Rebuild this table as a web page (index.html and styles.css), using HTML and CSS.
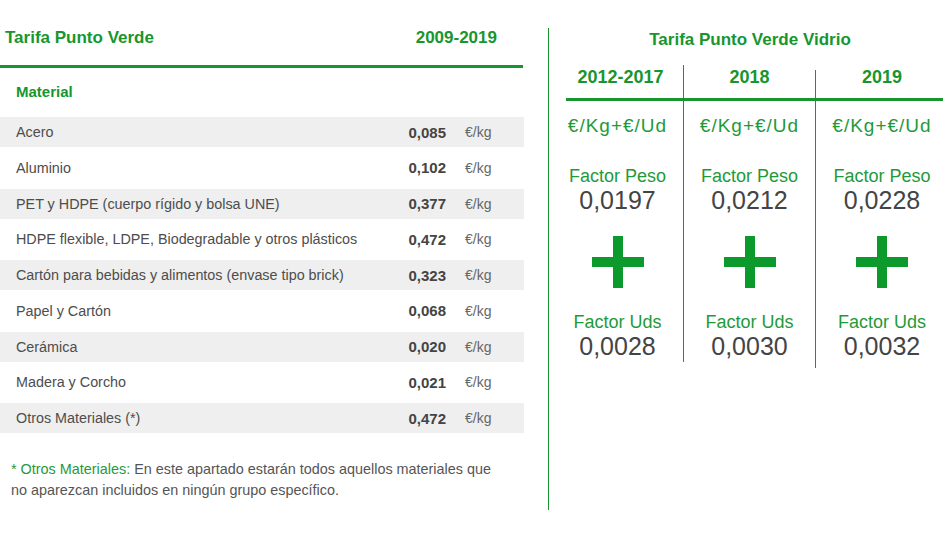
FILE: index.html
```html
<!DOCTYPE html>
<html lang="es">
<head>
<meta charset="utf-8">
<title>Tarifa Punto Verde</title>
<link rel="stylesheet" href="styles.css">
</head>
<body>
<div class="page">
  <section class="left">
    <div class="head">
      <span class="title">Tarifa Punto Verde</span>
      <span class="title">2009-2019</span>
    </div>
    <div class="material">Material</div>
    <div class="rows">
      <div class="row alt"><span class="name">Acero</span><span class="val">0,085</span><span class="unit">€/kg</span></div>
      <div class="row"><span class="name">Aluminio</span><span class="val">0,102</span><span class="unit">€/kg</span></div>
      <div class="row alt"><span class="name">PET y HDPE (cuerpo rígido y bolsa UNE)</span><span class="val">0,377</span><span class="unit">€/kg</span></div>
      <div class="row"><span class="name">HDPE flexible, LDPE, Biodegradable y otros plásticos</span><span class="val">0,472</span><span class="unit">€/kg</span></div>
      <div class="row alt"><span class="name">Cartón para bebidas y alimentos (envase tipo brick)</span><span class="val">0,323</span><span class="unit">€/kg</span></div>
      <div class="row"><span class="name">Papel y Cartón</span><span class="val">0,068</span><span class="unit">€/kg</span></div>
      <div class="row alt"><span class="name">Cerámica</span><span class="val">0,020</span><span class="unit">€/kg</span></div>
      <div class="row"><span class="name">Madera y Corcho</span><span class="val">0,021</span><span class="unit">€/kg</span></div>
      <div class="row alt"><span class="name">Otros Materiales (*)</span><span class="val">0,472</span><span class="unit">€/kg</span></div>
    </div>
    <p class="note"><span class="green">* Otros Materiales:</span> En este apartado estarán todos aquellos materiales que no aparezcan incluidos en ningún grupo específico.</p>
  </section>
  <section class="right">
    <div class="rtitle">Tarifa Punto Verde Vidrio</div>
    <div class="cols">
      <div class="col c1">
        <div class="chead">2012-2017</div>
        <div class="formula">€/Kg+€/Ud</div>
        <div class="label">Factor Peso</div>
        <div class="num">0,0197</div>
        <div class="plus"></div>
        <div class="label">Factor Uds</div>
        <div class="num">0,0028</div>
      </div>
      <div class="col c2">
        <div class="chead">2018</div>
        <div class="formula">€/Kg+€/Ud</div>
        <div class="label">Factor Peso</div>
        <div class="num">0,0212</div>
        <div class="plus"></div>
        <div class="label">Factor Uds</div>
        <div class="num">0,0030</div>
      </div>
      <div class="col c3">
        <div class="chead">2019</div>
        <div class="formula">€/Kg+€/Ud</div>
        <div class="label">Factor Peso</div>
        <div class="num">0,0228</div>
        <div class="plus"></div>
        <div class="label">Factor Uds</div>
        <div class="num">0,0032</div>
      </div>
    </div>
  </section>
</div>
</body>
</html>
```

FILE: styles.css
```css
html, body {
  margin: 0;
  padding: 0;
  background: #fff;
}
body {
  width: 943px;
  height: 534px;
  overflow: hidden;
  font-family: "Liberation Sans", Arial, sans-serif;
  color: #4a4a4a;
}
.page {
  display: flex;
  align-items: flex-start;
}
.left {
  width: 524px;
  flex: none;
}
.head {
  display: flex;
  justify-content: space-between;
  padding: 28px 26px 17px 5px;
  width: 523px;
  box-sizing: border-box;
  border-bottom: 3px solid #17962f;
}
.title {
  font-size: 17px;
  line-height: 20px;
  font-weight: bold;
  color: #17962f;
}
.material {
  margin-top: 14px;
  padding-left: 16px;
  font-size: 15px;
  line-height: 20px;
  font-weight: bold;
  color: #17962f;
}
.rows {
  margin-top: 15px;
  display: flex;
  flex-direction: column;
  gap: 5.75px;
}
.row {
  height: 30px;
  display: grid;
  grid-template-columns: 1fr auto 59px;
  column-gap: 19px;
  align-items: center;
  padding-left: 16px;
}
.row.alt {
  background: #efefef;
}
.name {
  font-size: 14.35px;
  color: #4d4d4d;
}
.val {
  font-size: 15px;
  font-weight: bold;
  color: #444;
}
.unit {
  font-size: 14px;
  color: #666;
}
.note {
  margin: 26px 0 0;
  padding: 0 20px 0 11px;
  font-size: 14.4px;
  line-height: 21px;
  color: #555;
}
.green {
  color: #1f9a3a;
}
.right {
  margin-left: 24px;
  margin-top: 28px;
  height: 482px;
  border-left: 1px solid #17962f;
  padding-left: 3px;
  flex: none;
  width: 396px;
}
.rtitle {
  width: 396px;
  text-align: center;
  font-size: 17px;
  line-height: 24px;
  font-weight: bold;
  color: #17962f;
}
.cols {
  display: flex;
  margin-top: 13px;
}
.col {
  width: 132px;
  flex: none;
  box-sizing: border-box;
  display: flex;
  flex-direction: column;
  align-items: center;
}
.c1 {
  height: 297px;
  border-right: 1px solid #17962f;
}
.c2 {
  margin-top: 5px;
  height: 298px;
  border-right: 1px solid #17962f;
}
.chead {
  align-self: stretch;
  text-align: center;
  font-size: 18px;
  line-height: 20px;
  font-weight: bold;
  color: #17962f;
  padding: 2px 0 11px;
  border-bottom: 3px solid #17962f;
}
.c1 .chead {
  margin-left: 14px;
  padding-right: 8px;
}
.c2 .chead {
  margin-top: -5px;
}
.formula {
  margin-top: 13px;
  font-size: 19px;
  line-height: 24px;
  letter-spacing: 1px;
  color: #1f9a3a;
}
.label {
  margin-top: 27px;
  font-size: 18px;
  line-height: 22px;
  color: #1f9a3a;
}
.num {
  font-size: 25px;
  line-height: 26px;
  color: #444;
}
.plus {
  margin-top: 23px;
  width: 52px;
  height: 52px;
  background:
    linear-gradient(#0b9a2b, #0b9a2b) center / 52px 10px no-repeat,
    linear-gradient(#0b9a2b, #0b9a2b) center / 10px 52px no-repeat;
}
.plus + .label {
  margin-top: 23px;
}
```
